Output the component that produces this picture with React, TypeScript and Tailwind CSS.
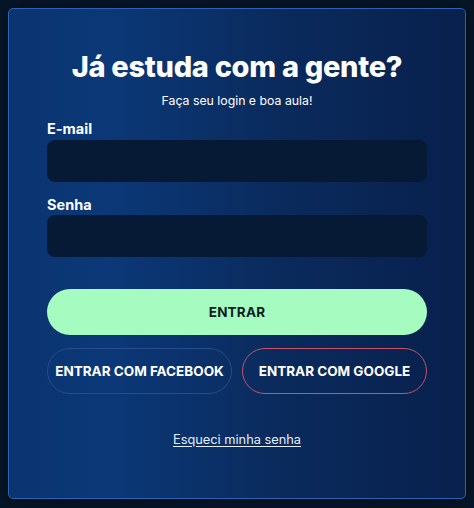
export default function App() {
  return (
    <div className="min-h-screen bg-[#061629] p-2 font-['Inter','Noto_Sans',sans-serif]">
      <div className="flex h-[491px] flex-col rounded-[5px] border border-[#2a62b4] bg-[linear-gradient(90deg,#0a3470_0%,#0b3877_22%,#0a2a5c_60%,#08204c_100%)] px-[38px] pt-[41px] text-white shadow-[0_0_12px_rgba(0,0,0,0.6)]">
        <h1 className="text-center text-[29px] leading-[34px] font-extrabold tracking-[-0.3px]">
          Já estuda com a gente?
        </h1>
        <p className="mt-[8px] text-center text-[12.3px] leading-[18px]">Faça seu login e boa aula!</p>

        <form className="mt-[10px] flex flex-col" onSubmit={(e) => e.preventDefault()}>
          <label className="text-[14.5px] leading-[18px] font-bold">E-mail</label>
          <input
            type="email"
            className="mt-[2px] h-[42px] w-full rounded-[8px] bg-[#061a35] px-3 text-white outline-none"
          />
          <label className="mt-[14px] text-[14.5px] leading-[18px] font-bold">Senha</label>
          <input
            type="password"
            className="mt-[1px] h-[42px] w-full rounded-[8px] bg-[#061a35] px-3 text-white outline-none"
          />

          <button
            type="submit"
            className="mt-[32px] h-[46px] w-full rounded-full bg-[#a6fbc1] text-[13.5px] font-bold tracking-[0.2px] text-[#0d1f24]"
          >
            ENTRAR
          </button>

          <div className="mt-[13px] flex gap-[10px]">
            <button
              type="button"
              className="h-[46px] flex-1 rounded-full border border-[#284c8c] text-[13.5px] font-bold text-white"
            >
              ENTRAR COM FACEBOOK
            </button>
            <button
              type="button"
              className="h-[46px] flex-1 rounded-full border border-[#c65368] text-[13.5px] font-bold text-white"
            >
              ENTRAR COM GOOGLE
            </button>
          </div>
        </form>

        <a href="#" className="mt-[37px] self-center text-[12.8px] leading-[18px] text-[#e6edf5] underline underline-offset-2">
          Esqueci minha senha
        </a>
      </div>
    </div>
  );
}
